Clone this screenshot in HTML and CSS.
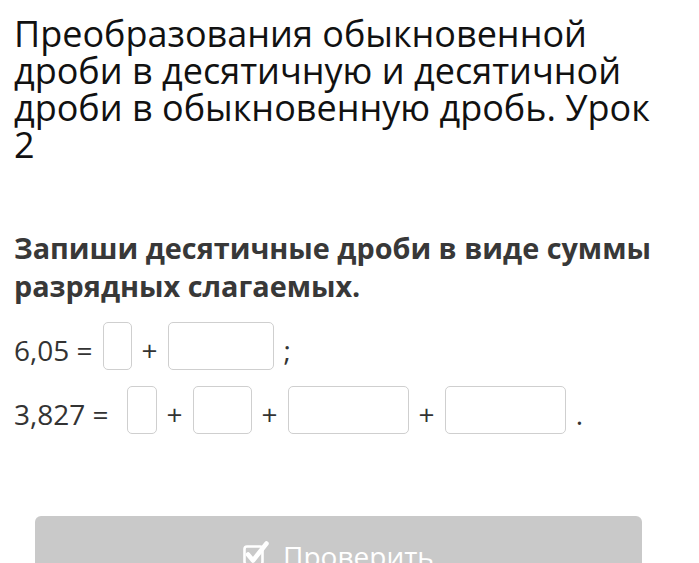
FILE: index.html
```html
<!DOCTYPE html>
<html lang="ru">
<head>
<meta charset="utf-8">
<title>Урок 2</title>
<link rel="stylesheet" href="styles.css">
</head>
<body>
<main class="page">
  <h1 class="title">Преобразования обыкновенной дроби в десятичную и десятичной дроби в обыкновенную дробь. Урок 2</h1>
  <p class="task">Запиши десятичные дроби в виде суммы разрядных слагаемых.</p>
  <div class="eq">
    <div class="row">
      <span class="lbl">6,05 =</span>
      <span class="box w29"></span>
      <span class="op">+</span>
      <span class="box w106"></span>
      <span class="op punct">;</span>
    </div>
    <div class="row">
      <span class="lbl lbl-wide">3,827 =</span>
      <span class="box w30"></span>
      <span class="op">+</span>
      <span class="box w59"></span>
      <span class="op">+</span>
      <span class="box w121"></span>
      <span class="op">+</span>
      <span class="box w121"></span>
      <span class="op punct">.</span>
    </div>
  </div>
  <button class="check" type="button">
    <svg class="check-icon" width="26" height="28" viewBox="0 0 26 28" aria-hidden="true">
      <rect x="1.5" y="6.5" width="18" height="18" rx="2.5" fill="none" stroke="#fff" stroke-width="2.6"/>
      <path d="M5 14.5 L10 20.5 L23.5 3.5" fill="none" stroke="#fff" stroke-width="4.5" stroke-linecap="round" stroke-linejoin="round"/>
    </svg>
    <span>Проверить</span>
  </button>
</main>
</body>
</html>
```
FILE: styles.css
```css
html, body {
  margin: 0;
  padding: 0;
  background: #fff;
  overflow: hidden;
}
.page {
  padding: 15px 0 0 14px;
  font-family: "Open Sans", "Noto Sans", sans-serif;
}
.title {
  margin: 0;
  width: 662px;
  font-size: 36px;
  font-weight: 400;
  line-height: 37px;
  color: #111;
}
.task {
  margin: 66px 0 0;
  width: 675px;
  font-size: 28.8px;
  font-weight: 700;
  line-height: 38px;
  color: #383838;
}
.eq {
  margin-top: 17px;
  display: flex;
  flex-direction: column;
  gap: 16px;
  color: #333;
  font-size: 28px;
}
.row {
  display: flex;
  align-items: center;
  height: 48px;
}
.lbl {
  padding-top: 8px;
  margin-right: 10px;
}
.lbl-wide {
  margin-right: 18px;
}
.op {
  padding-top: 8px;
  margin: 0 10px;
}
.punct {
  margin-left: 10px;
}
.box {
  box-sizing: border-box;
  height: 48px;
  border: 1.5px solid #cfcfcf;
  border-radius: 5px;
  background: #fff;
}
.w29 { width: 29px; }
.w30 { width: 30px; }
.w59 { width: 59px; }
.w106 { width: 106px; }
.w121 { width: 121px; }
.check {
  margin: 82px 0 0 21px;
  width: 607px;
  height: 64px;
  border: 0;
  border-radius: 6px;
  background: #c9c9c9;
  color: #fff;
  font-family: "Open Sans", "Noto Sans", sans-serif;
  font-size: 28px;
  display: flex;
  align-items: flex-start;
  justify-content: center;
  gap: 14px;
  padding: 21px 0 0;
  line-height: 38px;
}
.check-icon {
  margin-top: 3px;
}
```
